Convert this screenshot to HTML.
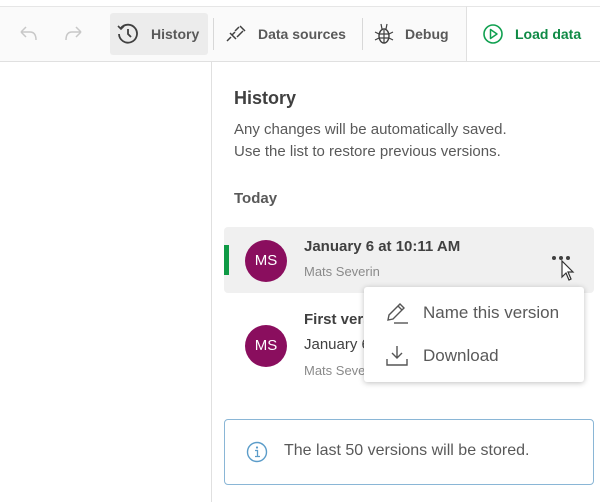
<!DOCTYPE html>
<html><head><style>
*{margin:0;padding:0;box-sizing:border-box}
body{width:600px;height:502px;background:#fff;font-family:"Liberation Sans",sans-serif;position:relative;overflow:hidden;color:#404040}
.a{position:absolute}
.tb{left:0;top:6px;width:600px;height:56px;background:#fafafa;border-top:1px solid #e6e6e6;border-bottom:1px solid #e0e0e0}
.t{font-size:14px;font-weight:bold;color:#595959}
</style></head><body>
<div class="a tb"></div>
<svg class="a" style="left:18px;top:24px" width="22" height="20" viewBox="0 0 22 20"><path d="M3 8 L8 3 M3 8 L8 13 M3 8 H12 Q18 8 18 16" fill="none" stroke="#c8c8c8" stroke-width="1.5"/></svg>
<svg class="a" style="left:62px;top:24px" width="22" height="20" viewBox="0 0 22 20"><path d="M19 8 L14 3 M19 8 L14 13 M19 8 H10 Q4 8 4 16" fill="none" stroke="#c8c8c8" stroke-width="1.5"/></svg>
<div class="a" style="left:110px;top:13px;width:98px;height:42px;background:#ececec;border-radius:3px"></div>
<svg class="a" style="left:116px;top:23px" width="24" height="22" viewBox="0 0 24 22"><path d="M5 5 A9 9 0 1 1 3 11" fill="none" stroke="#404040" stroke-width="1.8"/><path d="M2 3 L5 6 L8 3" fill="none" stroke="#404040" stroke-width="1.6"/><path d="M12 6 V11 L15 14" fill="none" stroke="#404040" stroke-width="1.8"/></svg>
<div class="a t" style="left:151px;top:26px">History</div>
<div class="a" style="left:213px;top:18px;width:1px;height:32px;background:#d8d8d8"></div>
<svg class="a" style="left:224px;top:23px" width="24" height="22" viewBox="0 0 24 22"><path d="M3 18 L7 14 M6 10 L12 16 M8 12 L11 9 M13 14 L16 11 M11 8 L15 4 M15 12 L19 8" fill="none" stroke="#404040" stroke-width="1.5"/><path d="M16 3 L21 8" stroke="#404040" stroke-width="1.5"/></svg>
<div class="a t" style="left:258px;top:26px">Data sources</div>
<div class="a" style="left:362px;top:18px;width:1px;height:32px;background:#d8d8d8"></div>
<svg class="a" style="left:373px;top:22px" width="22" height="24" viewBox="0 0 22 24"><ellipse cx="11" cy="14" rx="5" ry="7" fill="none" stroke="#404040" stroke-width="1.4"/><path d="M11 8 V21 M6 12 H16 M6 16 H16 M2 10 L6 12 M2 18 L6 16 M20 10 L16 12 M20 18 L16 16 M8 2 L9 7 M14 2 L13 7" stroke="#404040" stroke-width="1.2" fill="none"/></svg>
<div class="a t" style="left:405px;top:26px">Debug</div>
<div class="a" style="left:466px;top:6px;width:134px;height:56px;background:#fff;border-left:1px solid #e0e0e0;border-top:1px solid #e6e6e6;border-bottom:1px solid #e0e0e0"></div>
<svg class="a" style="left:482px;top:23px" width="22" height="22" viewBox="0 0 22 22"><circle cx="11" cy="11" r="9" fill="none" stroke="#10a050" stroke-width="1.6"/><path d="M8.5 6.5 L15 11 L8.5 15.5 Z" fill="none" stroke="#10a050" stroke-width="1.5" stroke-linejoin="round"/></svg>
<div class="a t" style="left:515px;top:26px;color:#0f8a45">Load data</div>
<div class="a" style="left:211px;top:62px;width:1px;height:440px;background:#e0e0e0"></div>
<div class="a" style="left:234px;top:88px;font-size:18px;font-weight:bold;color:#404040">History</div>
<div class="a" style="left:234px;top:119px;font-size:15px;line-height:22px;color:#595959">Any changes will be automatically saved.<br>Use the list to restore previous versions.</div>
<div class="a" style="left:234px;top:190px;font-size:15px;font-weight:bold;color:#595959">Today</div>
<div class="a" style="left:224px;top:227px;width:370px;height:66px;background:#f0f0f0;border-radius:4px"></div>
<div class="a" style="left:224px;top:245px;width:5px;height:30px;background:#0f9a45"></div>
<div class="a" style="left:245px;top:240px;width:42px;height:42px;border-radius:50%;background:#8a0e5e;color:#fff;font-size:15px;text-align:center;line-height:42px">MS</div>
<div class="a" style="left:304px;top:238px;font-size:15px;font-weight:bold;color:#404040">January 6 at 10:11 AM</div>
<div class="a" style="left:304px;top:264px;font-size:13px;color:#8a8a8a">Mats Severin</div>
<div class="a" style="left:552px;top:256px;width:4px;height:4px;border-radius:50%;background:#404040"></div>
<div class="a" style="left:559px;top:256px;width:4px;height:4px;border-radius:50%;background:#404040"></div>
<div class="a" style="left:566px;top:256px;width:4px;height:4px;border-radius:50%;background:#404040"></div>
<svg class="a" style="left:560px;top:260px" width="16" height="22" viewBox="0 0 16 22"><path d="M2 1 V17 L6 13 L9 20 L11 19 L8 12 H13 Z" fill="#fff" stroke="#333" stroke-width="1.2"/></svg>
<div class="a" style="left:245px;top:325px;width:42px;height:42px;border-radius:50%;background:#8a0e5e;color:#fff;font-size:15px;text-align:center;line-height:42px">MS</div>
<div class="a" style="left:304px;top:311px;font-size:15px;font-weight:bold;color:#404040">First version</div>
<div class="a" style="left:304px;top:336px;font-size:15px;color:#404040">January 6</div>
<div class="a" style="left:304px;top:363px;font-size:13px;color:#8a8a8a">Mats Severin</div>
<div class="a" style="left:364px;top:287px;width:220px;height:95px;background:#fff;border-radius:3px;box-shadow:0 1px 6px rgba(0,0,0,.25)"></div>
<svg class="a" style="left:384px;top:301px" width="26" height="24" viewBox="0 0 26 24"><path d="M4 19 L5 14 L16 3 L20 7 L9 18 Z M14 5 L18 9" fill="none" stroke="#555" stroke-width="1.4"/><path d="M10 22 H24" stroke="#555" stroke-width="1.4"/></svg>
<div class="a" style="left:423px;top:303px;font-size:17px;color:#595959">Name this version</div>
<svg class="a" style="left:384px;top:344px" width="26" height="24" viewBox="0 0 26 24"><path d="M13 2 V14 M8 9 L13 14 L18 9 M3 15 V21 H23 V15" fill="none" stroke="#555" stroke-width="1.4"/></svg>
<div class="a" style="left:423px;top:346px;font-size:17px;color:#595959">Download</div>
<div class="a" style="left:224px;top:419px;width:370px;height:66px;border:1.5px solid #8ab6d6;border-radius:4px"></div>
<svg class="a" style="left:246px;top:441px" width="22" height="22" viewBox="0 0 22 22"><circle cx="11" cy="11" r="9.5" fill="none" stroke="#5b9cc9" stroke-width="1.4"/><circle cx="11" cy="6.5" r="1.1" fill="#5b9cc9"/><path d="M9 9.5 H11.5 V15.5 M9 15.5 H14" fill="none" stroke="#5b9cc9" stroke-width="1.3"/></svg>
<div class="a" style="left:284px;top:442px;font-size:16px;color:#595959">The last 50 versions will be stored.</div>
</body></html>
